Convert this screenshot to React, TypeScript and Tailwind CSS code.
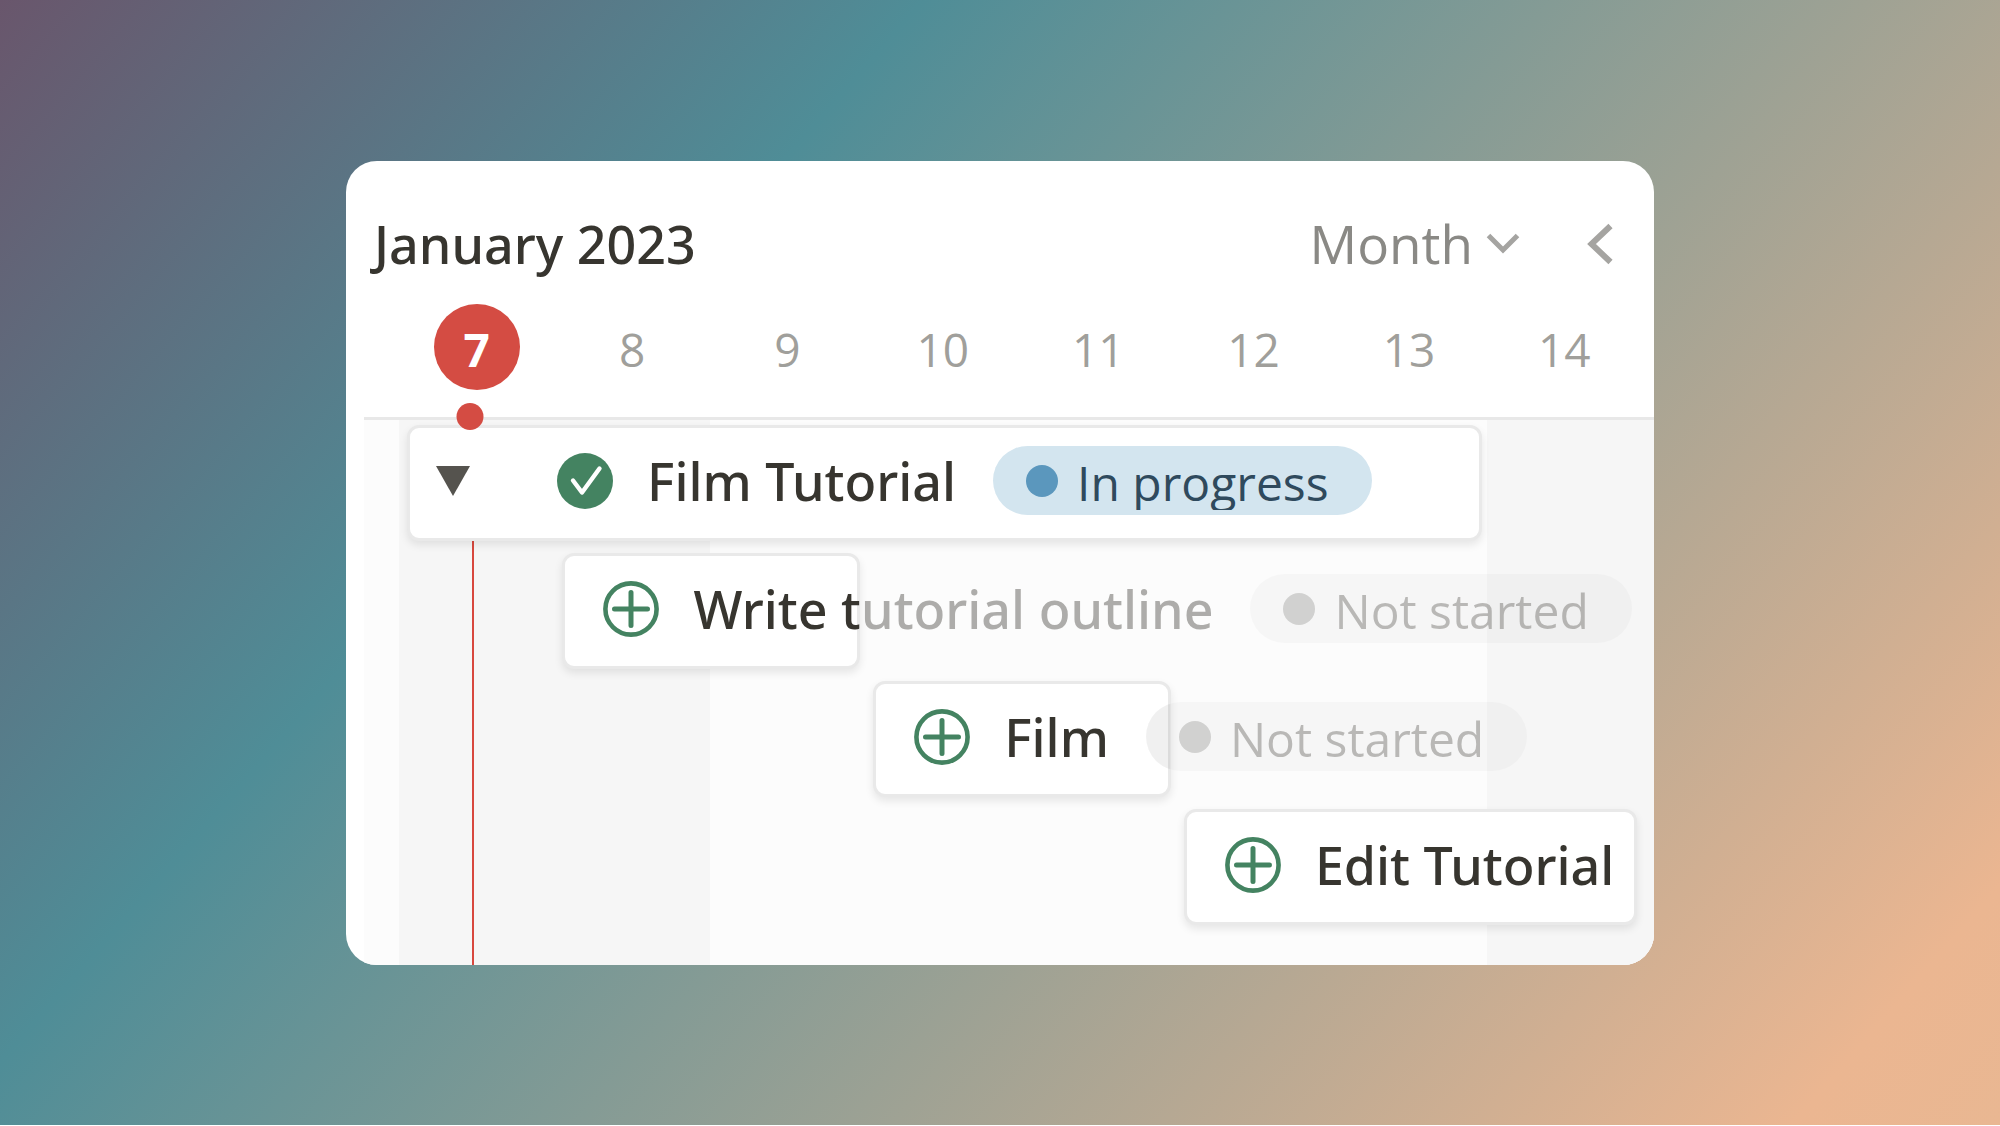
import type { CSSProperties } from "react";

type Task = {
  title: string;
  status?: "In progress" | "Not started";
  start: number;
  span: number;
  done?: boolean;
};

const days = [7, 8, 9, 10, 11, 12, 13, 14];
const weekend = [7, 8, 14];

const tasks: Task[] = [
  { title: "Film Tutorial", status: "In progress", start: 7, span: 7, done: true },
  { title: "Write tutorial outline", status: "Not started", start: 8, span: 2 },
  { title: "Film", status: "Not started", start: 10, span: 2 },
  { title: "Edit Tutorial", start: 12, span: 3 },
];

const columns = "grid grid-cols-[35px_repeat(8,minmax(0,1fr))_12px]";

// grid column of a day, after the narrow leading column
const columnOf = (day: number) => day - days[0] + 2;

// everything past the right edge of the bar is faded out
function fadeAfterBar({ start, span, status }: Task): CSSProperties {
  if (status !== "Not started") return {};
  const total = days[days.length - 1] - start + 1;
  const edge = `calc(${(span / total) * 100}% - 6px)`;
  return {
    maskImage: `linear-gradient(to right, #000 ${edge}, rgba(0,0,0,0.4) ${edge})`,
  };
}

function CheckIcon() {
  return (
    <svg viewBox="0 0 56 56" className="size-14 shrink-0" fill="none">
      <circle cx="28" cy="28" r="28" fill="#448361" />
      <path
        d="M16 27.5L25 39.5L42.5 15.5"
        stroke="#fff"
        strokeWidth="4.4"
        strokeLinecap="round"
        strokeLinejoin="round"
      />
    </svg>
  );
}

function PlusIcon() {
  return (
    <svg viewBox="0 0 56 56" className="size-14 shrink-0" fill="none" stroke="#448361" strokeLinecap="round">
      <circle cx="28" cy="28" r="25.6" strokeWidth="4.6" />
      <path d="M28 11.5V44.5M11.5 28H44.5" strokeWidth="5" />
    </svg>
  );
}

function Status({ value }: { value: Task["status"] }) {
  const active = value === "In progress";
  return (
    <span
      className={`ml-[37px] flex h-[69px] shrink-0 items-center rounded-full pr-[43px] pl-[33px] ${
        active ? "bg-[#d3e5ef] text-[#2f4a5d]" : "bg-black/6 text-[#55534e]"
      }`}
    >
      <span className={`size-8 shrink-0 rounded-full ${active ? "bg-[#5b97bd]" : "bg-[#91918e]"}`} />
      <span className={`ml-[19px] pt-1 text-[48px] leading-[54px] ${active ? "overflow-hidden" : ""}`}>
        {value}
      </span>
    </span>
  );
}

export default function App() {
  return (
    <div className="flex min-h-screen flex-col bg-white pb-px font-['Open_Sans','Noto_Sans',sans-serif]">
      <main className="flex flex-1 items-center justify-center bg-[linear-gradient(131deg,#69566c_0%,#4f8d97_31%,#ebb691_93%,#e9b792_100%)]">
        <section className="w-[65.4%] overflow-hidden rounded-[31px] bg-white">
          <header className="flex items-center pt-[47px] pr-[40px] pl-[28px] leading-[72px]">
            <h1 className="font-['Noto_Sans',sans-serif] text-[52px] font-medium text-[#37352f]">
              January 2023
            </h1>
            <button type="button" className="ml-auto flex items-center gap-3 text-[53px] text-[#8a8985]">
              Month
              <svg viewBox="0 0 36 24" className="h-6 w-9" fill="none" stroke="#a5a4a1" strokeWidth="5">
                <path d="M3.5 3.5L18 18L32.5 3.5" />
              </svg>
            </button>
            <button type="button" aria-label="Previous" className="ml-[65px]">
              <svg viewBox="0 0 28 42" className="h-[42px] w-7" fill="none" stroke="#a5a4a1" strokeWidth="6">
                <path d="M24.5 3L5.5 21L24.5 39" />
              </svg>
            </button>
          </header>

          <div className="ml-[18px]">
            <div
              className={`${columns} border-b-3 border-[#e8e8e8] pt-[24px] pb-[27px] text-[46px] leading-[86px] text-[#a09f9b]`}
            >
              {days.map((day, i) => (
                <div key={day} className={`relative flex justify-center ${i === 0 ? "col-start-2" : ""}`}>
                  {i === 0 ? (
                    <>
                      <span className="flex size-[86px] items-center justify-center rounded-full bg-[#d44c43] pt-1 font-bold text-white">
                        {day}
                      </span>
                      <span className="absolute -bottom-10 left-[46%] z-10 size-[27px] -translate-x-1/2 rounded-full bg-[#d44c43]" />
                    </>
                  ) : (
                    <span className="pt-1 leading-[82px]">{day}</span>
                  )}
                </div>
              ))}
            </div>

            <div className="grid">
              <div className={`${columns} col-start-1 row-start-1 bg-[#fcfcfc]`}>
                {days.map((day, i) => (
                  <div
                    key={day}
                    className={`${i === 0 ? "col-start-2" : ""} ${day === 14 ? "col-span-2" : ""} ${
                      weekend.includes(day) ? "bg-[#f6f6f6]" : ""
                    }`}
                  >
                    {i === 0 && <div className="ml-[47%] h-full w-0.5 bg-[#d8483e]" />}
                  </div>
                ))}
              </div>

              <div className={`${columns} col-start-1 row-start-1 gap-y-3 pt-[5px] pb-10`}>
                {tasks.map((task, i) => (
                  <div
                    key={task.title}
                    className="mr-[5px] ml-2 h-[116px] rounded-xl border-3 border-[#e9e9e9] bg-white shadow-[0_4px_8px_rgba(0,0,0,0.09)]"
                    style={{ gridColumn: `${columnOf(task.start)} / span ${task.span}`, gridRow: i + 1 }}
                  />
                ))}
                {tasks.map((task, i) => (
                  <div
                    key={task.title}
                    className={`flex items-center pb-1 whitespace-nowrap ${task.done ? "pl-[37px]" : "pl-[49px]"}`}
                    style={{
                      gridColumn: `${columnOf(task.start)} / ${columnOf(15)}`,
                      gridRow: i + 1,
                      ...fadeAfterBar(task),
                    }}
                  >
                    {task.done && (
                      <button type="button" aria-label="Collapse" className="mr-[87px]">
                        <svg viewBox="0 0 34 30" className="h-[30px] w-[34px]" fill="#55534e">
                          <path d="M0 0H34L17 30Z" />
                        </svg>
                      </button>
                    )}
                    {task.done ? <CheckIcon /> : <PlusIcon />}
                    <span className="ml-[34px] font-['Noto_Sans',sans-serif] text-[52px] leading-[72px] font-medium text-[#37352f]">
                      {task.title}
                    </span>
                    {task.status && <Status value={task.status} />}
                  </div>
                ))}
              </div>
            </div>
          </div>
        </section>
      </main>
    </div>
  );
}
